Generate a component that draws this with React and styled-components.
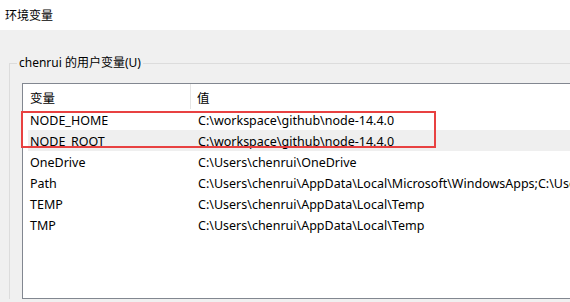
import React from 'react';
import styled, { createGlobalStyle } from 'styled-components';

const GlobalStyle = createGlobalStyle`
  html, body {
    margin: 0;
    padding: 0;
    width: 570px;
    height: 302px;
    overflow: hidden;
    background: #f0f0f0;
  }
  * { box-sizing: border-box; }
`;

const font = `"Noto Sans", "Noto Sans CJK SC", sans-serif`;

const Page = styled.div`
  width: 570px;
  height: 302px;
  overflow: hidden;
  font-family: ${font};
  font-size: 12px;
  color: #000000;
  background: #f0f0f0;
`;

const TitleBar = styled.div`
  height: 30px;
  background: #ffffff;
  display: flex;
  align-items: center;
  padding-left: 5px;
  font-size: 12px;
`;

const Body = styled.div`
  padding: 33px 0 0 9px;
`;

const GroupBox = styled.div`
  position: relative;
  width: 700px;
  border-top: 1px solid #dcdcdc;
  border-left: 1px solid #dcdcdc;
  padding: 19px 0 0 12px;
`;

const GroupLabel = styled.span`
  position: absolute;
  top: -9px;
  left: 7px;
  padding: 0 2px;
  line-height: 16px;
  background: #f0f0f0;
`;

const ListBox = styled.div`
  position: relative;
  height: 216px;
  background: #ffffff;
  border: 1px solid #828790;
  border-right: none;
  font-size: 12.5px;
`;

const Header = styled.div`
  display: grid;
  grid-template-columns: 168px 1fr;
  height: 25px;
  align-items: stretch;
`;

const HeaderCell = styled.div`
  display: flex;
  align-items: center;
  padding-left: ${p => p.$pad}px;
  padding-top: 1px;
  border-right: ${p => (p.$divider ? '1px solid #e5e5e5' : 'none')};
`;

const Row = styled.div`
  display: grid;
  grid-template-columns: 163px 1fr;
  height: 21px;
  margin-left: 5px;
  align-items: center;
  padding-top: 1px;
  background: ${p => (p.$hover ? '#efefef' : 'transparent')};
`;

const Cell = styled.div`
  padding-left: ${p => p.$pad}px;
  white-space: nowrap;
`;

const Marker = styled.div`
  position: absolute;
  left: -2px;
  top: 27px;
  width: 415px;
  height: 37px;
  border: 2px solid #e84141;
  pointer-events: none;
`;

const vars = [
  ['NODE_HOME', 'C:\\workspace\\github\\node-14.4.0'],
  ['NODE_ROOT', 'C:\\workspace\\github\\node-14.4.0'],
  ['OneDrive', 'C:\\Users\\chenrui\\OneDrive'],
  ['Path', 'C:\\Users\\chenrui\\AppData\\Local\\Microsoft\\WindowsApps;C:\\Users\\chenrui\\AppData'],
  ['TEMP', 'C:\\Users\\chenrui\\AppData\\Local\\Temp'],
  ['TMP', 'C:\\Users\\chenrui\\AppData\\Local\\Temp'],
];

const App = () => {
  return (
    <Page>
      <GlobalStyle />
      <TitleBar>环境变量</TitleBar>
      <Body>
        <GroupBox>
          <GroupLabel>chenrui 的用户变量(U)</GroupLabel>
          <ListBox>
            <Header>
              <HeaderCell $pad={7} $divider>变量</HeaderCell>
              <HeaderCell $pad={6}>值</HeaderCell>
            </Header>
            {vars.map(([name, value]) => (
              <Row key={name} $hover={name === 'NODE_ROOT'}>
                <Cell $pad={2}>{name}</Cell>
                <Cell $pad={7}>{value}</Cell>
              </Row>
            ))}
            <Marker />
          </ListBox>
        </GroupBox>
      </Body>
    </Page>
  );
};

export default App;
